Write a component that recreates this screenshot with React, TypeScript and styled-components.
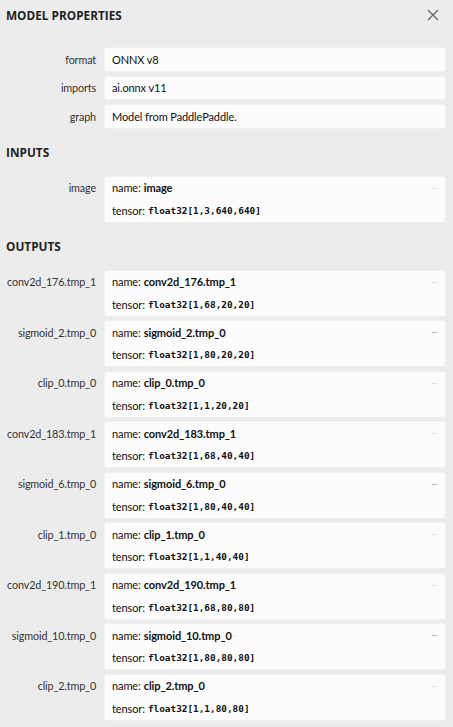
import React from 'react';
import styled, { createGlobalStyle } from 'styled-components';

const GlobalStyle = createGlobalStyle`
  html, body {
    margin: 0;
    padding: 0;
    background: #ececec;
  }
  body {
    font-family: Lato, "Open Sans", sans-serif;
    font-size: 12px;
    color: #000;
  }
`;

const Sidebar = styled.div`
  width: 453px;
  min-height: 727px;
  background: #ececec;
  box-sizing: border-box;
`;

const TitleBar = styled.div`
  height: 30px;
  display: flex;
  align-items: center;
  justify-content: space-between;
  padding: 0 13px 0 6px;
`;

const Title = styled.div`
  font-family: "Open Sans", sans-serif;
  font-weight: 700;
  font-size: 11.8px;
  color: #222;
`;

const CloseButton = styled.button`
  width: 14px;
  height: 14px;
  padding: 0;
  border: none;
  background: none;
  display: flex;
  align-items: center;
  justify-content: center;
  cursor: pointer;
`;

const Content = styled.div`
  padding: 18px 8px 0 0;
`;

const SectionTitle = styled.div`
  height: 20px;
  display: flex;
  align-items: center;
  padding-left: 6px;
  margin: 14.5px 0;
  font-family: "Open Sans", sans-serif;
  font-weight: 700;
  font-size: 11.8px;
  color: #222;
`;

const List = styled.div<{ $gap: number }>`
  display: flex;
  flex-direction: column;
  gap: ${p => p.$gap}px;
`;

const Row = styled.div`
  display: grid;
  grid-template-columns: 96px 1fr;
  column-gap: 9px;
`;

const Label = styled.div`
  height: 22.5px;
  display: flex;
  align-items: center;
  justify-content: flex-end;
  color: #333;
  white-space: nowrap;
  font-size: 10.8px;
  letter-spacing: -0.15px;
`;

const ValueBox = styled.div`
  position: relative;
  background: #fcfcfc;
  border-radius: 2px;
  box-shadow: 0 0 0 0.5px #f6f6f6;
`;

const Line = styled.div`
  height: 22.5px;
  display: flex;
  align-items: center;
  padding: 0 7px;
  white-space: nowrap;
  font-size: 11px;
  letter-spacing: -0.1px;
  color: #111;
`;

const Strong = styled.b`
  font-weight: 700;
  margin-left: 3px;
`;

const Code = styled.code`
  font-family: "DejaVu Sans Mono", "Liberation Mono", monospace;
  font-weight: 700;
  font-size: 9.4px;
  letter-spacing: 0;
  margin-left: 3px;
`;

const Expander = styled.span<{ $faint?: boolean }>`
  position: absolute;
  top: 11px;
  right: 8px;
  width: 5px;
  height: 1px;
  background: ${p => (p.$faint ? '#e2e2e2' : '#b0b0b0')};
`;

type Tensor = { name: string; shape: string; faint?: boolean };

const properties = [
  { label: 'format', value: 'ONNX v8' },
  { label: 'imports', value: 'ai.onnx v11' },
  { label: 'graph', value: 'Model from PaddlePaddle.' },
];

const inputs: Tensor[] = [{ name: 'image', shape: '[1,3,640,640]', faint: true }];

const outputs: Tensor[] = [
  { name: 'conv2d_176.tmp_1', shape: '[1,68,20,20]', faint: true },
  { name: 'sigmoid_2.tmp_0', shape: '[1,80,20,20]' },
  { name: 'clip_0.tmp_0', shape: '[1,1,20,20]', faint: true },
  { name: 'conv2d_183.tmp_1', shape: '[1,68,40,40]', faint: true },
  { name: 'sigmoid_6.tmp_0', shape: '[1,80,40,40]' },
  { name: 'clip_1.tmp_0', shape: '[1,1,40,40]', faint: true },
  { name: 'conv2d_190.tmp_1', shape: '[1,68,80,80]', faint: true },
  { name: 'sigmoid_10.tmp_0', shape: '[1,80,80,80]' },
  { name: 'clip_2.tmp_0', shape: '[1,1,80,80]', faint: true },
];

const TensorRow: React.FC<{ t: Tensor }> = ({ t }) => (
  <Row>
    <Label>{t.name}</Label>
    <ValueBox>
      <Line>
        name:<Strong>{t.name}</Strong>
      </Line>
      <Line>
        tensor:<Code>float32{t.shape}</Code>
      </Line>
      <Expander $faint={t.faint} />
    </ValueBox>
  </Row>
);

const App: React.FC = () => (
  <Sidebar>
    <GlobalStyle />
    <TitleBar>
      <Title>MODEL PROPERTIES</Title>
      <CloseButton aria-label="close">
        <svg width="12" height="12" viewBox="0 0 12 12">
          <path d="M1 1 L11 11 M11 1 L1 11" stroke="#666" strokeWidth="1.3" fill="none" />
        </svg>
      </CloseButton>
    </TitleBar>
    <Content>
      <List $gap={6}>
        {properties.map(p => (
          <Row key={p.label}>
            <Label>{p.label}</Label>
            <ValueBox>
              <Line>{p.value}</Line>
            </ValueBox>
          </Row>
        ))}
      </List>
      <SectionTitle>INPUTS</SectionTitle>
      <List $gap={5.5}>
        {inputs.map(t => (
          <TensorRow key={t.name} t={t} />
        ))}
      </List>
      <SectionTitle>OUTPUTS</SectionTitle>
      <List $gap={5.5}>
        {outputs.map(t => (
          <TensorRow key={t.name} t={t} />
        ))}
      </List>
    </Content>
  </Sidebar>
);

export default App;
